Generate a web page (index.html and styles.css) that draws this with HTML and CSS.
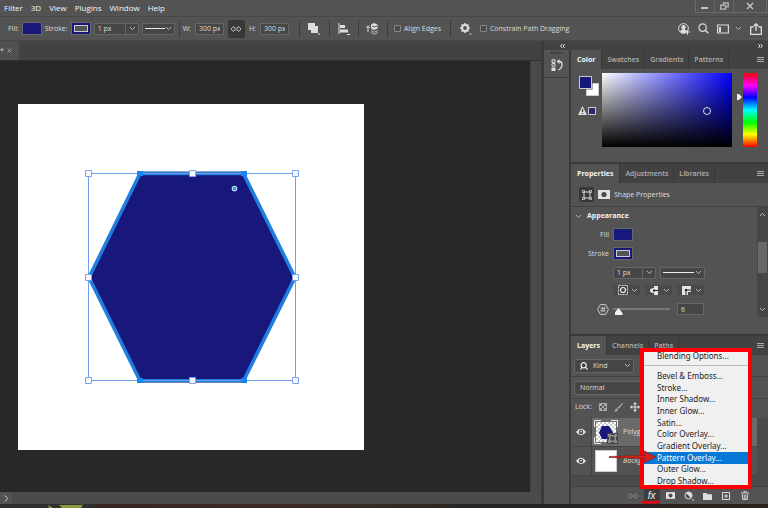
FILE: index.html
```html
<!DOCTYPE html>
<html lang="en">
<head>
<meta charset="utf-8">
<title>Image editor</title>
<link rel="stylesheet" href="styles.css">
</head>
<body>
<svg class="sprite" aria-hidden="true">
  <symbol id="chev" viewBox="0 0 7 5"><path d="M1 1l2.5 2.6L6 1" fill="none" stroke="currentColor"/></symbol>
  <symbol id="burger" viewBox="0 0 7 5"><path d="M0 .5h7M0 2.5h7M0 4.5h7" stroke="currentColor"/></symbol>
  <symbol id="link" viewBox="0 0 10 6"><path d="M4.3 2.2A2 2 0 1 0 4.3 3.8M5.7 2.2A2 2 0 1 1 5.7 3.8M3.2 3h3.6" fill="none" stroke="currentColor"/></symbol>
  <symbol id="eye" viewBox="0 0 10 8"><path d="M0 4Q5-2.6 10 4Q5 10.6 0 4z" fill="#e6e6e6"/><circle cx="5" cy="4" r="2.2" fill="#444"/><circle cx="5" cy="3.6" r=".9" fill="#e6e6e6"/></symbol>
  <symbol id="shape" viewBox="0 0 10 10"><path d="M2 2h6v6H2z" fill="none" stroke="currentColor"/><path d="M.5.5h2v2h-2zM7.500.5h2v2h-2zM.5 7.500h2v2h-2zM7.500 7.500h2v2h-2z" fill="#444" stroke="currentColor" stroke-width=".8"/></symbol>
  <symbol id="mask" viewBox="0 0 12 9"><path d="M0 0h12v9H0z" fill="#e2e2e2"/><circle cx="6" cy="4.500" r="2.600" fill="#4b4b4b"/></symbol>
</svg>
<div class="app">
  <header class="menubar">
    <nav class="menus">
      <a href="#">Filter</a><a href="#">3D</a><a href="#">View</a><a href="#">Plugins</a><a href="#">Window</a><a href="#">Help</a>
    </nav>
    <div class="winbtns">
      <button aria-label="Minimize"><svg width="8" height="8" viewBox="0 0 8 8"><path d="M0 5h7v2H0z" fill="#c4c4c4"/></svg></button>
      <button aria-label="Restore"><svg width="9" height="8" viewBox="0 0 9 8"><path d="M3.500 3V.8h4.700v4H6M.8 3.200h4.700v4H.8z" fill="none" stroke="#bbb" stroke-width="1.300"/></svg></button>
      <button class="wide" aria-label="Close"><svg width="8" height="8" viewBox="0 0 8 8"><path d="M1 1l6 6M7 1L1 7" stroke="#c4c4c4" stroke-width="1.500"/></svg></button>
    </div>
  </header>

  <div class="options">
    <div class="group paint">
      <span>Fill:</span><button class="swatch" aria-label="Fill color"></button>
      <span>Stroke:</span><button class="swatch stroke" aria-label="Stroke color"></button>
      <span class="select split"><select aria-label="Stroke width"><option>1 px</option></select><svg class="chev"><use href="#chev"/></svg></span>
      <button class="select line" aria-label="Stroke style"><i></i><svg class="chev"><use href="#chev"/></svg></button>
    </div>
    <div class="group">
      <label for="w">W:</label><input class="num" id="w" value="300 px">
      <button class="linkbtn" aria-label="Link dimensions"><svg width="10" height="6"><use href="#link"/></svg></button>
      <label for="h">H:</label><input class="num" id="h" value="300 px">
    </div>
    <div class="tool first"><button aria-label="Path operations"><svg width="12" height="12" viewBox="0 0 12 12"><path d="M0 0h7v3h3v7H3V7H0zM10 10.500h2v1h-2z" fill="#ddd"/></svg></button></div>
    <div class="tool"><button aria-label="Path alignment"><svg width="12" height="12" viewBox="0 0 12 12"><path d="M1 0v11" stroke="#ddd"/><path d="M2 2h5v3H2zM2 6.500h8v3H2zM9 11h3v1H9z" fill="#ddd"/></svg></button></div>
    <div class="tool"><button aria-label="Path arrangement"><svg width="13" height="12" viewBox="0 0 13 12"><path d="M2 9V3M.3 4.800L2 2.800l1.700 2" fill="none" stroke="#ddd"/><path d="M5 1.500L8 0l3.500 1.500v4L8 7 5 5.500z" fill="#ddd"/><path d="M6 3l2.300 1L11 3" stroke="#555" fill="none"/><path d="M5 7.500l3.300 1.700L12 7.500M5 9.500l3.300 1.700L12 9.500" fill="none" stroke="#bbb" stroke-width=".9"/></svg></button></div>
    <div class="group checks"><label><input type="checkbox">Align Edges</label></div>
    <div class="group checks gear">
      <button aria-label="Path options"><svg width="12" height="12" viewBox="0 0 12 12"><circle cx="5" cy="5" r="2.900" fill="none" stroke="#ddd" stroke-width="2"/><path d="M5 0v2M5 8v2M0 5h2M8 5h2M1.500 1.500l1.300 1.300M7.200 7.200l1.300 1.300M8.500 1.500L7.200 2.800M2.800 7.200L1.500 8.500" stroke="#ddd" stroke-width="1.600"/><path d="M9.500 10.500h2v1h-2z" fill="#ddd"/></svg></button>
      <label><input type="checkbox">Constrain Path Dragging</label>
    </div>
    <div class="right">
      <button aria-label="Account"><svg width="12" height="12" viewBox="0 0 12 12"><circle cx="5.500" cy="5.500" r="4.900" fill="none" stroke="#ddd"/><path d="M5.500 2a2.100 2.300 0 0 1 1.300 4.200c0 1 2 .9 2.200 2C8 9.600 7 10 5.500 10S3 9.600 2 8.200c.2-1.100 2.200-1 2.200-2A2.300 2.300 0 0 1 5.500 2z" fill="#ddd"/><path d="M7 9h5M9.500 6.800v5" stroke="#ddd"/></svg></button>
      <button aria-label="Search"><svg width="11" height="11" viewBox="0 0 11 11"><circle cx="4.600" cy="4.600" r="3.700" fill="none" stroke="#ddd" stroke-width="1.200"/><path d="M7.300 7.300l3 3" stroke="#ddd" stroke-width="1.400"/></svg></button>
      <button aria-label="Workspace" class="workspace"><svg width="12" height="10" viewBox="0 0 12 10"><path d="M.6 1h10.800v8H.6z" fill="none" stroke="#ddd" stroke-width="1.200"/><path d="M2 3h2v5H2z" fill="#ddd"/></svg><svg class="chev"><use href="#chev"/></svg></button>
      <button aria-label="Share"><svg width="12" height="12" viewBox="0 0 12 12"><path d="M3.500 4H.7v7.300h10.600V4H8.500M6 8V1M3.700 3L6 .8 8.300 3" fill="none" stroke="#ddd" stroke-width="1.300"/></svg></button>
    </div>
  </div>

  <main class="work">
    <section class="document">
      <div class="doctabs"><div class="doctab">*<button aria-label="Close document"><svg width="5" height="5" viewBox="0 0 5 5"><path d="M.5.5l4 4M4.500.5l-4 4" stroke="#aaa" stroke-width=".9"/></svg></button></div></div>
      <div class="view">
        <div class="stage">
          <svg class="page" viewBox="0 0 346 346" role="img" aria-label="Hexagon shape">
            <path fill="#fff" d="M0 0h346v346H0z"/>
            <path d="M122 69.500h103.500L277 173.500l-51.500 103.300H122L71 173.500z" fill="#18177b" stroke="#1f7fe0" stroke-width="3.500"/>
            <path d="M122 67.900h104M122 278.400h104" stroke="#4d6f9d" stroke-width=".8"/>
            <path d="M70.500 69.500h207v207h-207z" fill="none" stroke="#6f9fe9" stroke-width="1"/>
            <path d="M119 67h6v5h-6zM223 67h6v5h-6zM119 274h6v5h-6zM223 274h6v5h-6z" fill="#1a83ee"/>
            <g fill="#f7f9ff" stroke="#7aa3ef"><path d="M67.500 66.500h6v6h-6zM171.500 66.500h6v6h-6zM274.500 66.500h6v6h-6zM67.500 170.500h6v6h-6zM274.500 170.500h6v6h-6zM67.500 273.500h6v6h-6zM171.500 273.500h6v6h-6zM274.500 273.500h6v6h-6z"/></g>
            <circle cx="216.500" cy="84.500" r="2.200" fill="#1b5fc0" stroke="#b5dcff" stroke-width="1.300"/><circle cx="216.500" cy="84.500" r=".7" fill="#9fd0ff"/>
          </svg>
        </div>
        <div class="vscroll"></div>
      </div>
      <div class="status"><button aria-label="Status options"><svg width="5" height="7" viewBox="0 0 5 7"><path d="M1 .5l2.500 3L1 6.500" fill="none" stroke="#ccc"/></svg></button></div>
    </section>

    <aside class="dock">
      <div class="dockhead">
        <button aria-label="Expand panels"><svg width="5" height="4" viewBox="0 0 5 4"><path d="M2.200 0L.6 2l1.600 2M4.700 0L3.100 2l1.600 2" fill="none" stroke="#ddd"/></svg></button>
        <button aria-label="Collapse panels"><svg width="5" height="4" viewBox="0 0 5 4"><path d="M.3 0l1.600 2L.3 4M2.800 0l1.600 2-1.600 2" fill="none" stroke="#ddd"/></svg></button>
      </div>
      <div class="rail">
        <i class="grip"></i>
        <button aria-label="History"><svg width="12" height="12" viewBox="0 0 12 12"><path d="M1 .8h3v2.500H1zM1 4.600h3v2.500H1z" fill="none" stroke="#ddd"/><path d="M.5 8.500h4V12h-4z" fill="#ddd"/><path d="M6.500 2.500h2.300q2.200.2 2.200 3 0 3.500-3.500 5.500" fill="none" stroke="#ddd" stroke-width="1.300"/><path d="M8.500 0v5L5.700 2.500z" fill="#ddd"/></svg></button>
      </div>
      <div class="panels">
        <section class="panel">
          <div class="tabs"><button class="on">Color</button><button>Swatches</button><button>Gradients</button><button>Patterns</button><svg class="burger"><use href="#burger"/></svg></div>
          <div class="color">
            <div class="chips">
              <svg width="22" height="22" viewBox="0 0 22 22"><path d="M8.500 8.500h12v12h-12z" fill="#fff" stroke="#ccc"/><path d="M.5.5h14v14H.5z" fill="#555"/><path d="M1.500 1.500h12v12h-12z" fill="#18177b" stroke="#ccc"/></svg>
              <svg width="22" height="10" viewBox="0 0 22 10"><path d="M4.500 0L9 9H0z" fill="#ddd"/><path d="M4.500 3v3M4.500 7v1" stroke="#444" stroke-width="1.300"/><path d="M10.500 1.500h7v7h-7z" fill="#29296b" stroke="#ccc"/></svg>
            </div>
            <div class="field"><i class="picker"></i></div>
            <svg class="pointer" viewBox="0 0 5 6"><path d="M0 0h2l3 3-3 3H0z" fill="#eee"/></svg>
            <div class="hue"></div>
          </div>
        </section>

        <section class="panel">
          <div class="tabs"><button class="on">Properties</button><button>Adjustments</button><button>Libraries</button><svg class="burger"><use href="#burger"/></svg></div>
          <div class="shapehead"><span class="shapeico"><svg width="10" height="10"><use href="#shape"/></svg></span><svg width="12" height="9"><use href="#mask"/></svg><span>Shape Properties</span></div>
          <div class="props">
            <div class="form">
              <h2><svg class="chev"><use href="#chev"/></svg>Appearance</h2>
              <div class="row"><span class="lab">Fill</span><button class="swatch" aria-label="Shape fill"></button></div>
              <div class="row"><span class="lab">Stroke</span><button class="swatch stroke" aria-label="Shape stroke"></button></div>
              <div class="row"><span class="lab"></span><span class="select split"><select aria-label="Shape stroke width"><option>1 px</option></select><svg class="chev"><use href="#chev"/></svg></span><button class="select line wide" aria-label="Shape stroke style"><i></i><svg class="chev"><use href="#chev"/></svg></button></div>
              <div class="row trio"><span class="lab"></span>
                <button class="select" aria-label="Stroke alignment"><svg width="10" height="10" viewBox="0 0 10 10"><path d="M.5.5h9v9h-9z" fill="#444" stroke="#ddd" stroke-dasharray="2 1"/><circle cx="5" cy="5" r="2.500" fill="none" stroke="#eee" stroke-width="1.200"/></svg><svg class="chev"><use href="#chev"/></svg></button>
                <button class="select" aria-label="Stroke caps"><svg width="8" height="9" viewBox="0 0 8 9"><path d="M8 0H4v2Q0 2 0 4.500T4 7v2h4z" fill="#e4e4e4"/><path d="M3 3.500h2v2H3zM5 4h3v1H5z" fill="#222"/></svg><svg class="chev"><use href="#chev"/></svg></button>
                <button class="select" aria-label="Stroke corners"><svg width="9" height="9" viewBox="0 0 9 9"><path d="M0 0h9v6H6v3H0z" fill="#e4e4e4"/><path d="M3 3h2v2H3zM5 3.500h4v1H5zM3.500 5h1v4h-1z" fill="#222"/></svg><svg class="chev"><use href="#chev"/></svg></button>
              </div>
              <div class="row sides"><span class="lab"><svg width="12" height="11" viewBox="0 0 12 11"><path d="M3.300.6h5.400l2.700 4.900-2.700 4.900H3.300L.6 5.500z" fill="none" stroke="#ccc"/><path d="M5.500 2.800l-.8 5.400M7.600 2.800l-.8 5.400M3.700 4.400h5M3.400 6.600h5" stroke="#ccc" stroke-width=".8"/></svg></span><input type="range" min="3" max="100" value="6" aria-label="Number of sides"><input class="num" value="6" aria-label="Sides"></div>
            </div>
            <div class="bar"><svg class="chev up"><use href="#chev"/></svg><i></i><svg class="chev"><use href="#chev"/></svg></div>
          </div>
        </section>

        <section class="panel layers">
          <div class="tabs"><button class="on">Layers</button><button>Channels</button><button>Paths</button><svg class="burger"><use href="#burger"/></svg></div>
          <div class="filter"><span class="select kind"><svg width="8" height="8" viewBox="0 0 8 8"><circle cx="3.700" cy="3.300" r="2.600" fill="none" stroke="#eee" stroke-width="1.200"/><path d="M5.300 5.200L7.500 7.500M2 5L.7 7.500" stroke="#eee" stroke-width="1.200"/></svg><select aria-label="Layer filter"><option>Kind</option></select><svg class="chev"><use href="#chev"/></svg></span></div>
          <div class="blend"><span class="select mode"><select aria-label="Blend mode"><option>Normal</option></select></span></div>
          <div class="lock"><span>Lock:</span>
            <svg width="8" height="8" viewBox="0 0 8 8"><path d="M.5.5h7v7h-7z" fill="none" stroke="#aaa"/><path d="M1 1h2v2H1zM5 1h2v2H5zM3 3h2v2H3zM1 5h2v2H1zM5 5h2v2H5z" fill="#aaa"/></svg>
            <svg width="9" height="9" viewBox="0 0 9 9"><path d="M8.500 0L9 .6 4.500 6 3.300 5zM2.800 5.500L4 6.600Q3 9 0 8.800q1.300-.7 1.300-1.800T2.800 5.500z" fill="#b5b5b5"/></svg>
            <svg width="10" height="10" viewBox="0 0 10 10"><path d="M5 1v8M1 5h8" stroke="#ddd"/><path d="M5 0l2 2.200H3zM5 10L3 7.800h4zM0 5l2.200-2v4zM10 5L7.800 7V3z" fill="#ddd"/></svg>
          </div>
          <ul class="list">
            <li class="sel"><button class="eye" aria-label="Toggle Polygon"><svg width="10" height="8"><use href="#eye"/></svg></button><span class="name"><svg class="thumb" viewBox="0 0 24 24"><defs><pattern id="chk" width="4" height="4" patternUnits="userSpaceOnUse"><path fill="#fff" d="M0 0h4v4H0z"/><path fill="#ccc" d="M0 0h2v2H0zM2 2h2v2H2z"/></pattern></defs><path d="M2 2h20v20H2z" fill="url(#chk)"/><path d="M8 6h7l4 6.500-4 6.500H8l-3-6.500z" fill="#18177b"/><path d="M.5 7V.5H7M17 .5h6.500V7M.5 17v6.500H7" fill="none" stroke="#eee"/><path d="M13 13h11v11H13z" fill="#454545"/><g color="#bbb"><use href="#shape" x="14" y="14" width="9" height="9"/></g></svg>Polygon 1</span></li>
            <li><button class="eye" aria-label="Toggle Background"><svg width="10" height="8"><use href="#eye"/></svg></button><span class="name"><i class="thumb white"></i><em>Background</em></span></li>
          </ul>
          <div class="foot">
            <button aria-label="Link layers" class="dim"><svg width="10" height="6"><use href="#link"/></svg></button>
            <button class="fx"><i>fx</i></button>
            <button aria-label="Add mask"><svg width="9" height="7"><use href="#mask"/></svg></button>
            <button aria-label="Adjustment layer"><svg width="10" height="10" viewBox="0 0 10 10"><circle cx="4.500" cy="4.500" r="3.500" fill="none" stroke="#ddd"/><path d="M2 2a3.500 3.500 0 0 1 5 5z" fill="#ddd"/><path d="M8 8.500h2v1H8z" fill="#ddd"/></svg></button>
            <button aria-label="New group"><svg width="9" height="8" viewBox="0 0 9 8"><path d="M0 1h3.500l1 1.200H9V8H0z" fill="#ddd"/></svg></button>
            <button aria-label="New layer"><svg width="8" height="8" viewBox="0 0 8 8"><path d="M.5.5h7v7h-7zM4 2v4M2 4h4" fill="none" stroke="#ddd"/></svg></button>
            <button aria-label="Delete layer"><svg width="8" height="9" viewBox="0 0 8 9"><path d="M0 2h8M2.800 1.500V.5h2.400v1M1.300 3l.4 5.500h4.600L6.700 3M3.200 3.500V8M4.800 3.500V8" fill="none" stroke="#ddd" stroke-width=".9"/></svg></button>
          </div>
        </section>
      </div>
    </aside>
  </main>
  <footer class="taskbar"><svg width="94" height="4" viewBox="0 0 94 4"><path d="M48 1l5 3h-4zM59 1h22l2-.5-2 3.500H62z" fill="#8a9a3c"/></svg></footer>

  <div class="popup" role="menu">
    <button role="menuitem" class="top">Blending Options...</button>
    <div class="items">
      <button role="menuitem">Bevel &amp; Emboss...</button><button role="menuitem">Stroke...</button><button role="menuitem">Inner Shadow...</button><button role="menuitem">Inner Glow...</button><button role="menuitem">Satin...</button><button role="menuitem">Color Overlay...</button><button role="menuitem">Gradient Overlay...</button><button role="menuitem" class="hot">Pattern Overlay...</button><button role="menuitem">Outer Glow...</button><button role="menuitem">Drop Shadow...</button>
    </div>
  </div>
  <svg class="arrow" viewBox="0 0 48 14"><path d="M0 6.500L36 5.500 34.500.5 47 7 34.500 13 36 8.500 0 7.500z" fill="#d5201c" stroke="#8d1712" stroke-width=".6"/></svg>
  <svg class="underline" viewBox="0 0 19 4"><path d="M1.500 2q8 1 16-.2" fill="none" stroke="#f00010" stroke-width="2.500" stroke-linecap="round"/></svg>
</div>
</body>
</html>
```
FILE: styles.css
```css
* { box-sizing: border-box; }
body { margin: 0; font: 7px/10px "Open Sans", "Noto Sans", sans-serif; color: #ddd; background: #282828; }
button, input, select { font: inherit; color: inherit; margin: 0; padding: 0; border: 0; background: none; border-radius: 0; }
select { appearance: none; outline: 0; }
a { color: inherit; text-decoration: none; }
svg { display: block; flex: none; }
.sprite { position: absolute; width: 0; height: 0; }
.app { position: relative; display: grid; grid-template-rows: 17px 24px 1fr 4px; height: 100vh; overflow: hidden; }

.menubar { display: flex; justify-content: space-between; background: #535353; border-bottom: 1px solid #484848; }
.menus { display: flex; gap: 8px; padding-left: 4px; font-size: 8px; line-height: 16px; color: #f5f5f5; }
.winbtns { display: flex; height: 13px; margin-right: 1px; border: 1px solid #696969; border-top: 0; }
.winbtns button { display: grid; place-items: center; width: 19px; border-right: 1px solid #666; }
.winbtns .wide { width: 32px; border: 0; }

.options { display: flex; align-items: center; background: #535353; border-bottom: 1px solid #484848; padding: 0 6px 0 8px; white-space: nowrap; }
.group { display: flex; align-items: center; gap: 4px; height: 17px; }
.group.paint { gap: 3px; }
.group + .group { margin-left: 4px; padding-left: 3px; border-left: 1px solid #3d3d3d; }
.swatch { width: 20px; height: 13px; border: 1px solid #686868; outline: 0; background: #18177b; display: grid; place-items: center; }
.swatch.stroke::before { content: ""; width: 12px; height: 5px; border: 1px solid #ccc; background: #555; }
.select { position: relative; display: flex; align-items: center; justify-content: space-between; height: 12px; background: #464646; border: 1px solid #666; border-radius: 1px; padding: 0 2px 0 3px; }
.select select { flex: 1; min-width: 0; line-height: 10px; }
.chev { width: 7px; height: 5px; color: #b5b5b5; }
.split { width: 43px; }
.paint .split { width: 45px; }
.split .chev { margin-left: 3px; }
.split select { border-right: 1px solid #666; }
.select.line { width: 33px; padding-left: 2px; }
.select.line i { width: 20px; height: 1px; background: #eee; }
.select.line.wide { width: 45px; }
.select.line.wide i { width: 31px; }
.num { width: 29px; height: 12px; padding: 0 3px; background: #464646; border: 1px solid #666; }
.linkbtn { display: grid; place-items: center; width: 17px; height: 18px; background: #383838; border-radius: 2px; color: #bbb; }
.tool { display: grid; place-items: center; width: 29px; height: 17px; border-left: 1px solid #3d3d3d; }
.tool.first { width: 30px; margin-left: 10px; }
.group.checks { margin: 0; border-left: 1px solid #3d3d3d; padding-left: 6px; width: 63px; }
.group.gear { width: auto; padding-left: 9px; gap: 8px; }
.checks label { display: flex; align-items: center; gap: 3px; }
input[type="checkbox"] { appearance: none; width: 7px; height: 7px; border: 1px solid #888; border-radius: 1px; background: #4a4a4a; }
.right { display: flex; align-items: center; gap: 8px; margin-left: auto; }
.right .workspace { display: flex; align-items: center; gap: 6px; }

.work { display: grid; grid-template-columns: 1fr 224px; min-height: 0; background: #3a3a3a; }
.document { display: grid; grid-template-rows: 20px 1fr 12px; min-width: 0; min-height: 0; margin-right: 3px; }
.doctabs { background: #424242; border-bottom: 1px solid #303030; }
.doctab { display: flex; align-items: center; justify-content: space-between; width: 19px; height: 19px; padding: 0 7px 0 0; background: #4f4f4f; }
.view { display: grid; grid-template-columns: 1fr 11px; min-height: 0; overflow: hidden; }
.stage { background: #282828; overflow: hidden; }
.page { width: 346px; margin: 43px 0 0 18px; }
.vscroll { background: #4a4a4a; border-left: 1px solid #424242; }
.status { background: #4b4b4b; }
.status button { display: grid; place-items: center; width: 12px; height: 12px; background: #525252; }

.dock { display: grid; grid-template: 9px 1fr / 25px 1fr; column-gap: 2px; min-height: 0; }
.dockhead { grid-column: span 2; display: flex; justify-content: space-between; align-items: center; padding: 0 5px 0 16px; background: #424242; }
.rail { background: #535353; padding: 2px 7px; }
.rail button { display: block; margin-top: 5px; }
.rail::after { content: ""; display: block; height: 1px; margin: 6px -7px 0; background: #3d3d3d; }
.grip { display: block; height: 2px; border-top: 1px dotted #333; border-bottom: 1px dotted #333; }
.panels { display: flex; flex-direction: column; gap: 2px; min-height: 0; }
.panel { background: #535353; }
.tabs { display: flex; height: 19px; background: #424242; color: #b0b0b0; }
.tabs button { padding: 0 5px; border-right: 1px solid #383838; font-weight: 600; }
.tabs .on { padding: 0 6px; background: #535353; color: #f5f5f5; font-weight: bold; }
.burger { width: 7px; height: 5px; margin: 7px 4px 0 auto; color: #aaa; }
.color { display: grid; grid-template-columns: 22px 1fr 5px 14px; column-gap: 1px; padding: 4px 11px 15px 7px; }
.chips { display: grid; gap: 9px; align-content: start; padding-top: 2px; }
.field { position: relative; height: 74px; margin: 0 4px 0 1px; background: linear-gradient(transparent, #000), linear-gradient(90deg, #fff, #00f); }
.picker { position: absolute; left: 78%; top: 46%; width: 8px; height: 8px; border: 1px solid #ddd; border-radius: 50%; }
.pointer { width: 5px; height: 6px; margin-top: 21px; }
.hue { background: linear-gradient(#f00, #f0f 17%, #00f 33%, #0ff 50%, #0f0 67%, #ff0 83%, #f00); }

.shapehead { display: flex; align-items: center; gap: 4px; height: 24px; padding-left: 8px; border-bottom: 1px solid #424242; }
.shapeico { display: grid; place-items: center; width: 15px; height: 15px; background: #383838; border-radius: 2px; }
.props { display: grid; grid-template-columns: 1fr 11px; height: 127px; }
.form h2 { display: flex; align-items: center; gap: 5px; height: 18px; margin: 0; padding-left: 4px; font-size: 7px; color: #f2f2f2; }
.row { display: flex; align-items: center; gap: 4px; height: 19px; }
.lab { width: 38px; display: flex; justify-content: flex-end; }
.trio { height: 16px; }
.trio .select { width: 27px; height: 10px; border: 0; padding: 0 2px 0 5px; background: #4a4a4a; }
.trio .select + .select { margin-left: 1px; }
.sides { height: 22px; }
.sides .num { margin-left: 3px; width: 27px; }
input[type="range"] { appearance: none; width: 57px; height: 10px; }
input[type="range"]::-webkit-slider-runnable-track { height: 2px; background: #777; }
input[type="range"]::-webkit-slider-thumb { appearance: none; width: 8px; height: 7px; background: #f2f2f2; clip-path: polygon(50% 0, 100% 70%, 100% 100%, 0 100%, 0 70%); }
.bar { display: flex; flex-direction: column; align-items: center; height: 110px; padding: 5px 1px; background: #464646; }
.bar i { width: 9px; height: 31px; margin: 25px 0 auto; background: #686868; }
.up { transform: rotate(180deg); }

.layers { flex: 1; display: flex; flex-direction: column; min-height: 0; }
.filter, .blend { display: flex; align-items: center; height: 22px; padding-left: 3px; border-bottom: 1px solid #424242; }
.filter .select, .blend .select { height: 14px; }
.kind { width: 60px; padding-left: 5px; gap: 5px; }
.mode { width: 110px; padding-left: 5px; }
.lock { display: flex; align-items: center; gap: 7px; height: 19px; padding: 0 0 3px 4px; }
.list { list-style: none; margin: 0; padding: 0 11px 0 0; flex: 1; background: #4b4b4b; }
.list li { display: flex; height: 29px; background: #535353; border-bottom: 1px solid #444; }
.eye { display: grid; place-items: center; width: 21px; border-right: 1px solid #444; }
.name { flex: 1; display: flex; align-items: center; gap: 5px; padding-left: 2px; }
.sel .name { background: #6a6a6a; }
.thumb { width: 24px; height: 24px; }
.white { width: 22px; height: 22px; margin: 0 1px; background: #fff; border: 1px solid #ccc; }
.foot { display: flex; align-items: center; justify-content: space-between; height: 18px; padding: 0 15px 0 54px; border-top: 1px solid #444; }
.foot button { display: grid; place-items: center; width: 16px; height: 17px; }
.foot .dim { color: #888; }
.foot .fx { background: #3d3d3d; font: italic 10px/14px "Liberation Sans", sans-serif; color: #eee; }
.taskbar { background: linear-gradient(90deg, #303030 94px, #3b2422 95px, #3a2c22 45%, #242424 65%, #2b211d); }

.popup { position: absolute; right: 16px; bottom: 19px; width: 112px; height: 141px; overflow: hidden; background: #f0f0f0; border: 4px solid #fb0007; border-radius: 1px; font: 8px/10px "Noto Sans", "Open Sans", sans-serif; color: #1c1c1c; }
.popup button { display: block; width: 100%; padding-left: 13px; text-align: left; white-space: nowrap; }
.popup .top { height: 14px; padding-bottom: 5px; line-height: 8px; border-bottom: 1px solid #bbb; }
.items { display: grid; grid-auto-rows: 1fr; height: 117px; margin-top: 4px; }
.popup .hot { background: #0878d7; color: #fff; }
.arrow { position: absolute; right: 111px; bottom: 44px; width: 48px; height: 14px; }
.underline { position: absolute; right: 108px; bottom: 4px; width: 19px; height: 4px; }
```
